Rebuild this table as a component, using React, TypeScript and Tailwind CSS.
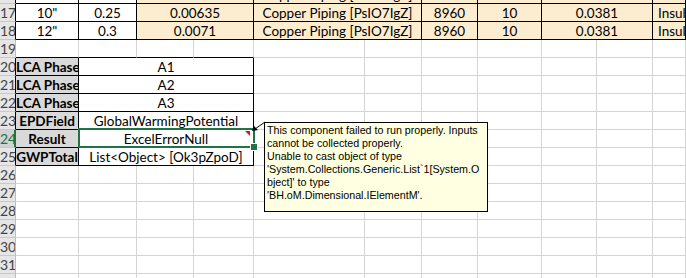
import React from 'react';

type Cell = {
  span?: number;
  text?: string;
  bg?: string;
  bold?: boolean;
  left?: boolean;
  edge?: 'black' | 'grid';
  bottom?: 'black' | 'grid';
  selected?: boolean;
};

type Row = {
  n: number;
  headerEdge: 'black' | 'grid';
  active?: boolean;
  cells: Cell[];
};

const ORANGE = 'bg-[#fdedd0]';
const LABEL = 'bg-[#d9d9d9]';

const pipeRow = (n: number, size: string, thick: string, radius: string): Row => ({
  n,
  headerEdge: 'black',
  cells: [
    { text: size, edge: 'black', bottom: 'black' },
    { text: thick, edge: 'black', bottom: 'black' },
    { span: 2, text: radius, bg: ORANGE, edge: 'black', bottom: 'black' },
    { span: 2, text: 'Copper Piping [PsIO7IgZ]', bg: ORANGE, edge: 'black', bottom: 'black' },
    { text: '8960', bg: ORANGE, edge: 'black', bottom: 'black' },
    { text: '10', bg: ORANGE, edge: 'black', bottom: 'black' },
    { span: 2, text: '0.0381', bg: ORANGE, edge: 'black', bottom: 'black' },
    { text: 'Insulation', bg: ORANGE, left: true, edge: 'black', bottom: 'black' },
  ],
});

const emptyRow = (n: number, blackBottomUpTo = 0): Row => ({
  n,
  headerEdge: 'grid',
  cells: Array.from({ length: 11 }, (_, i) => ({
    edge: 'grid' as const,
    bottom: i < blackBottomUpTo ? ('black' as const) : ('grid' as const),
  })),
});

const tableRow = (n: number, label: string, value: string, selected = false): Row => ({
  n,
  headerEdge: 'black',
  active: selected,
  cells: [
    { text: label, bold: true, bg: LABEL, edge: 'black', bottom: 'black' },
    { span: 3, text: value, edge: 'black', bottom: 'black', selected },
    ...Array.from({ length: 7 }, () => ({ edge: 'grid' as const, bottom: 'grid' as const })),
  ],
});

const rows: Row[] = [
  pipeRow(16, '8"', '0.2', '0.00559'),
  pipeRow(17, '10"', '0.25', '0.00635'),
  pipeRow(18, '12"', '0.3', '0.0071'),
  emptyRow(19, 4),
  tableRow(20, 'LCA Phase', 'A1'),
  tableRow(21, 'LCA Phase', 'A2'),
  tableRow(22, 'LCA Phase', 'A3'),
  tableRow(23, 'EPDField', 'GlobalWarmingPotential'),
  tableRow(24, 'Result', 'ExcelErrorNull', true),
  tableRow(25, 'GWPTotal', 'List<Object> [Ok3pZpoD]'),
  ...[26, 27, 28, 29, 30, 31, 32].map((n) => emptyRow(n)),
];

const spanClass: Record<number, string> = {
  1: 'col-span-1',
  2: 'col-span-2',
  3: 'col-span-3',
};

function GridCell({ cell }: { cell: Cell }) {
  return (
    <div
      className={[
        spanClass[cell.span ?? 1],
        'relative h-[18px] border-r border-b overflow-hidden whitespace-nowrap leading-[18px]',
        cell.edge === 'black' ? 'border-r-black' : 'border-r-[#d4d4d4]',
        cell.bottom === 'black' ? 'border-b-black' : 'border-b-[#d4d4d4]',
        cell.bg ?? 'bg-white',
        cell.bold ? 'font-bold' : '',
        cell.left ? 'text-left pl-[5px]' : 'text-center',
      ].join(' ')}
    >
      {cell.text}
      {cell.selected && (
        <svg className="absolute right-[3px] top-[1px]" width="5" height="5" viewBox="0 0 5 5">
          <polygon points="0,0 5,0 5,5" fill="#e81123" />
        </svg>
      )}
    </div>
  );
}

function Selection() {
  // green outline around the active cell, with the fill handle at its corner
  return (
    <div className="pointer-events-none absolute left-[78px] top-[128px] w-[177px] h-[20px] border-2 border-[#217346]">
      <div className="absolute right-[-4px] bottom-[-4px] w-[6px] h-[6px] bg-[#217346] outline outline-1 outline-white" />
    </div>
  );
}

function Comment() {
  const lines = [
    'This component failed to run properly. Inputs',
    'cannot be collected properly.',
    'Unable to cast object of type',
    "'System.Collections.Generic.List`1[System.O",
    "bject]' to type",
    "'BH.oM.Dimensional.IElementM'.",
  ];
  return (
    <>
      <svg className="absolute left-[250px] top-[118px]" width="20" height="16" viewBox="0 0 20 16">
        <line x1="5" y1="11" x2="15" y2="4" stroke="black" strokeWidth="1" />
        <polygon points="2,13 4,8 8,12" fill="black" />
      </svg>
      <div className="absolute left-[264px] top-[122px] w-[224px] h-[90px] bg-[#ffffe1] border border-black px-[2px] pt-[1px] text-[10.7px] leading-[13px] text-black font-['Liberation_Sans',Arial,sans-serif]">
        {lines.map((l) => (
          <div key={l} className="whitespace-nowrap">
            {l}
          </div>
        ))}
      </div>
    </>
  );
}

export default function App() {
  return (
    <div className="relative w-[686px] h-[278px] overflow-hidden bg-white font-['Lato',sans-serif] text-[13.5px] text-black">
      <div className="mt-[-14px] grid grid-cols-[16px_63px_58px_57px_60px_111px_57px_56px_64px_55px_56px_1fr]">
        {rows.map((row) => (
          <React.Fragment key={row.n}>
            <div
              className={[
                'h-[18px] overflow-hidden whitespace-nowrap text-right pr-[1px] text-[14px] leading-[18px] border-b border-b-[#c8c8c8]',
                row.active
                  ? 'bg-[#d2d2d2] text-[#217346] border-r-2 border-r-[#217346]'
                  : row.headerEdge === 'black'
                    ? 'bg-[#e6e6e6] text-[#444] border-r border-r-black'
                    : 'bg-[#e6e6e6] text-[#444] border-r border-r-[#bdbdbd]',
              ].join(' ')}
            >
              {row.n}
            </div>
            {row.cells.map((cell, i) => (
              <GridCell key={i} cell={cell} />
            ))}
          </React.Fragment>
        ))}
      </div>
      <Selection />
      <Comment />
    </div>
  );
}
